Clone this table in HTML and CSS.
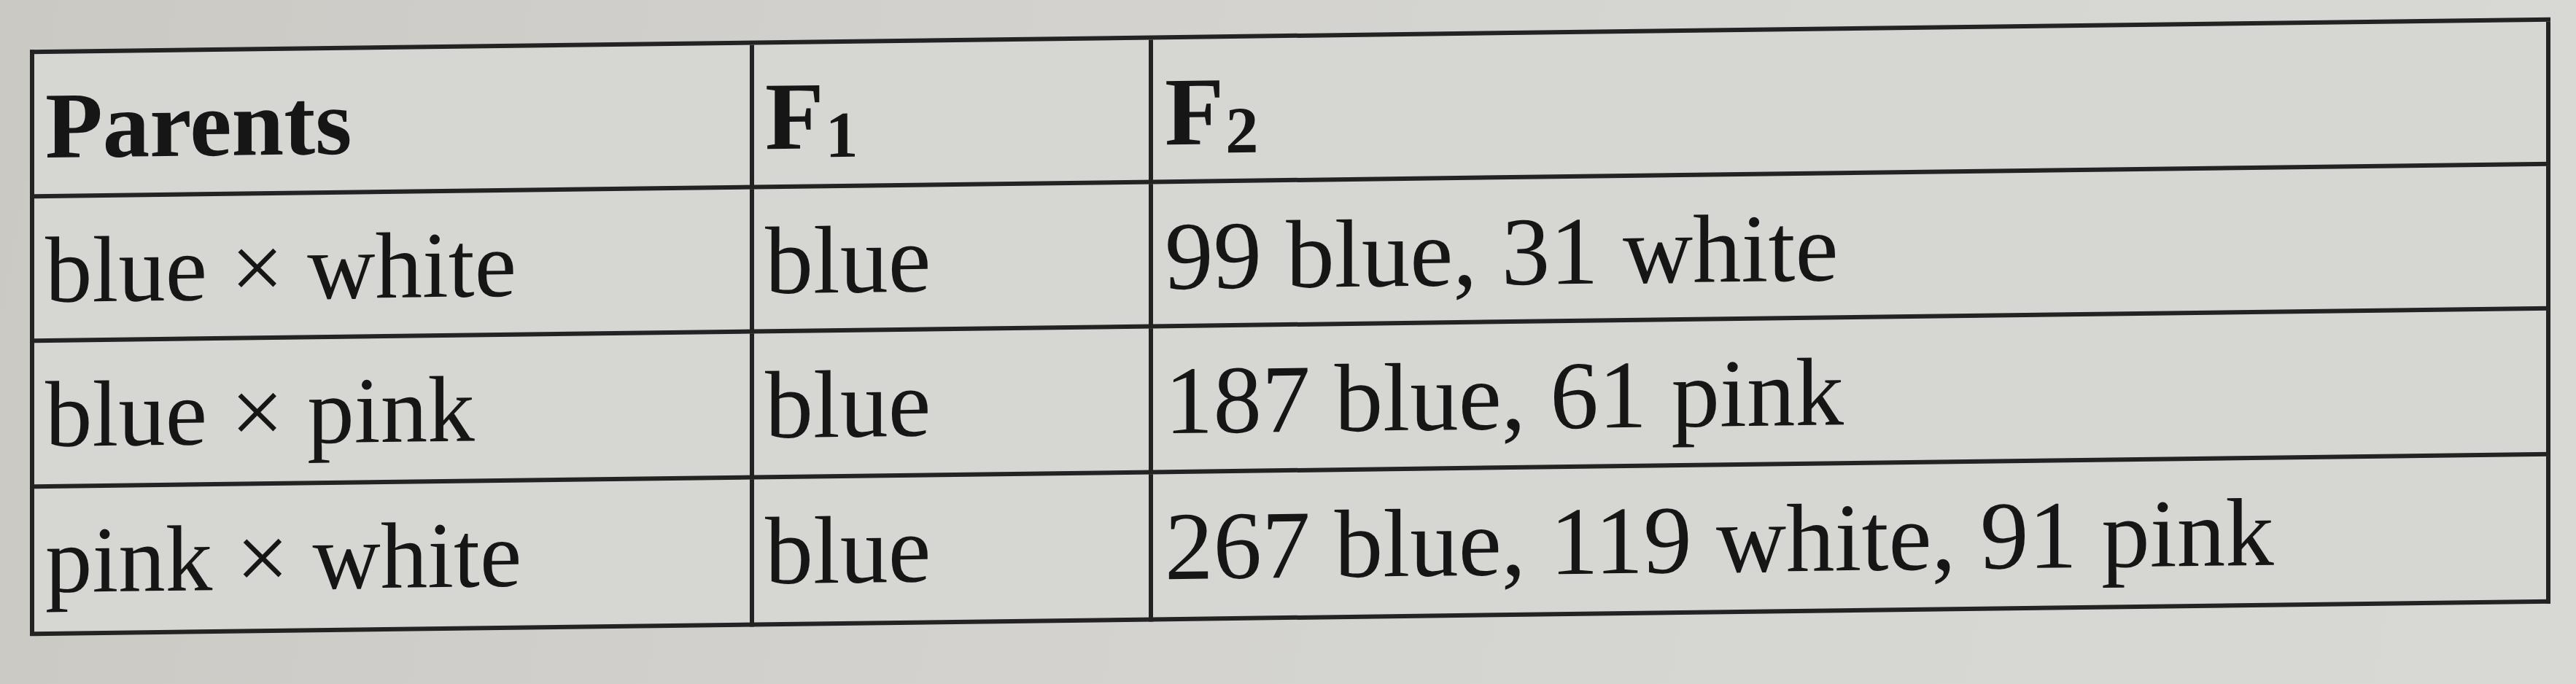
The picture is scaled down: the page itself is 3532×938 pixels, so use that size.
FILE: index.html
```html
<!DOCTYPE html>
<html lang="en">
<head>
<meta charset="utf-8">
<title>Parents F1 F2 table</title>
<link rel="stylesheet" href="styles.css">
</head>
<body>
<div class="sheet">
  <div class="grid">
    <div class="cell c1 head">Parents</div>
    <div class="cell c2 head">F<span class="sub">1</span></div>
    <div class="cell c3 head">F<span class="sub">2</span></div>

    <div class="cell c1">blue × white</div>
    <div class="cell c2">blue</div>
    <div class="cell c3">99 blue, 31 white</div>

    <div class="cell c1">blue × pink</div>
    <div class="cell c2">blue</div>
    <div class="cell c3">187 blue, 61 pink</div>

    <div class="cell c1">pink × white</div>
    <div class="cell c2">blue</div>
    <div class="cell c3">267 blue, 119 white, 91 pink</div>
  </div>
</div>
</body>
</html>
```

FILE: styles.css
```css
html, body {
  margin: 0;
  padding: 0;
}

body {
  width: 3532px;
  height: 938px;
  overflow: hidden;
  background: linear-gradient(100deg, #cac9c4 0%, #d2d1cd 35%, #d6d6d2 70%, #d8d8d4 100%);
  font-family: "Liberation Serif", "Times New Roman", serif;
  color: #161616;
}

.sheet {
  padding-top: 46px;
  padding-left: 41px;
}

.grid {
  display: grid;
  grid-template-columns: 987px 547px 1916px;
  grid-template-rows: 198px 198px 200px 202px;
  width: 3456px;
  box-sizing: border-box;
  border-top: 6px solid #232323;
  border-left: 6px solid #232323;
  background: #d6d6d2;
  transform: skewY(-0.74deg);
  transform-origin: center center;
}

.cell {
  box-sizing: border-box;
  border-right: 6px solid #232323;
  border-bottom: 6px solid #232323;
  padding: 35px 0 0 15px;
  font-size: 129px;
  line-height: 128px;
  white-space: nowrap;
  overflow: hidden;
}

.c2 {
  font-size: 132px;
}

.c3 {
  font-size: 133px;
  padding-left: 16px;
}

.head {
  font-weight: bold;
}

.sub {
  font-size: 0.68em;
  line-height: 0;
  vertical-align: -12px;
  margin-left: 2px;
}
```
